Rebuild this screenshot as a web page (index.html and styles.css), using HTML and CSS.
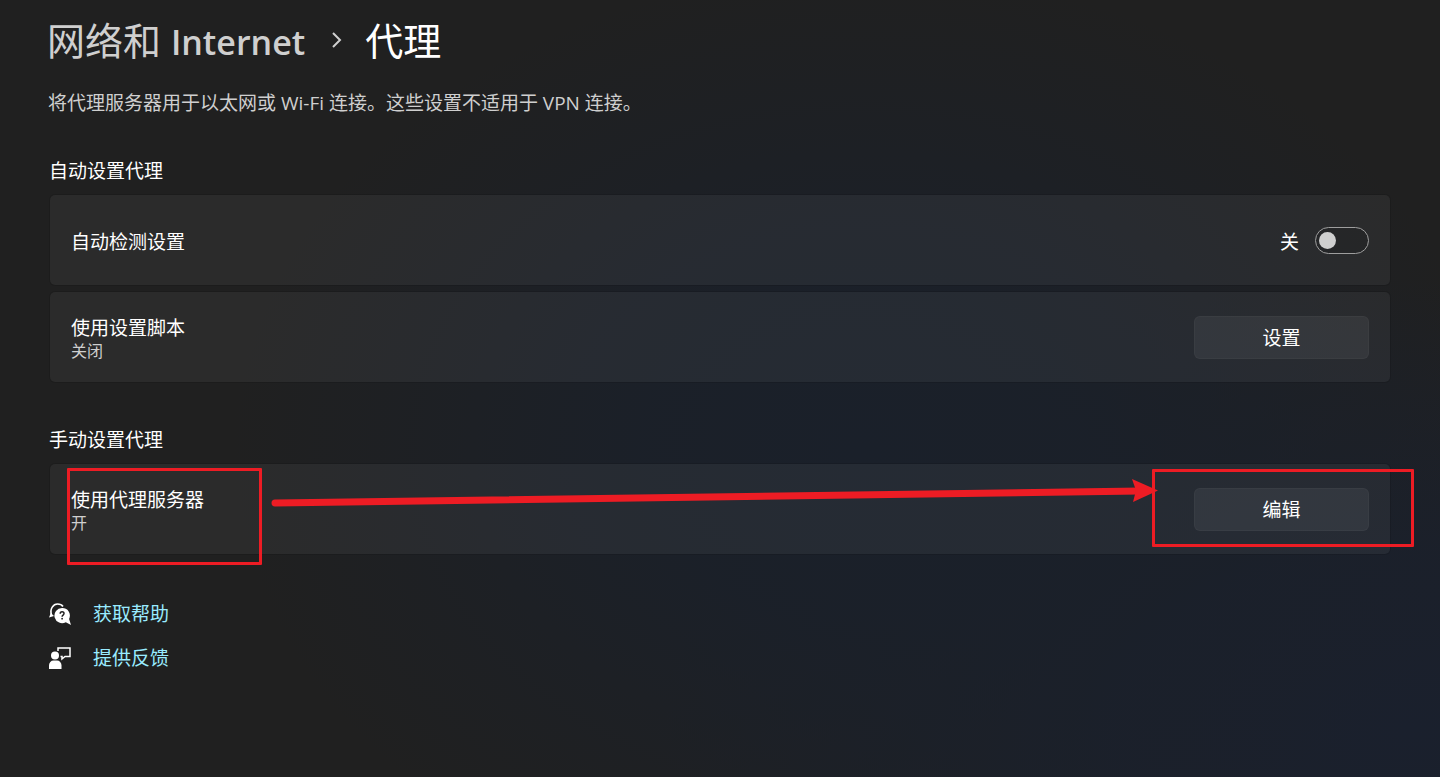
FILE: index.html
```html
<!DOCTYPE html>
<html lang="zh-CN">
<head>
  <meta charset="utf-8">
  <meta name="viewport" content="width=device-width, initial-scale=1">
  <title>代理</title>
  <link rel="stylesheet" href="styles.css">
</head>
<body>
  <main class="page">
    <h1 class="breadcrumb">
      <a class="crumb-link" href="#">网络和 <span class="latin">Internet</span></a>
      <svg class="crumb-arrow" viewBox="0 0 12 18" aria-hidden="true">
        <path d="M2 2l7 7-7 7" fill="none" stroke="currentColor" stroke-width="2"/>
      </svg>
      <span class="crumb-current">代理</span>
    </h1>
    <p class="description">将代理服务器用于以太网或 Wi-Fi 连接。这些设置不适用于 VPN 连接。</p>

    <section class="section">
      <h2 class="section-title">自动设置代理</h2>
      <div class="card">
        <label class="card-text" for="auto-detect">自动检测设置</label>
        <div class="toggle-group">
          <span class="card-text">关</span>
          <input type="checkbox" id="auto-detect" class="toggle" role="switch">
        </div>
      </div>
      <div class="card">
        <div class="card-text">
          <div class="card-title">使用设置脚本</div>
          <div class="card-state">关闭</div>
        </div>
        <button class="card-btn">设置</button>
      </div>
    </section>

    <section class="section">
      <h2 class="section-title">手动设置代理</h2>
      <div class="card">
        <div class="card-text">
          <div class="card-title">使用代理服务器</div>
          <div class="card-state">开</div>
        </div>
        <button class="card-btn">编辑</button>

        <!-- Red marks: from the proxy label to its edit button -->
        <div class="mark mark-label"></div>
        <div class="mark mark-button"></div>
        <svg class="mark-arrow" aria-hidden="true">
          <line x1="4" y1="25" x2="98%" y2="13" stroke="#ed1c24" stroke-width="7" stroke-linecap="round"/>
          <svg x="100%" y="0" overflow="visible">
            <path d="M0 12.500L-26 1l4 11.500-3 11.500z" fill="#ed1c24"/>
          </svg>
        </svg>
      </div>
    </section>

    <nav class="help-links">
      <a class="help-link" href="#">
        <svg class="help-icon" viewBox="0 0 22 22" aria-hidden="true">
          <path d="M2.500 12C.5 5.500 4.500 1 8.500 1c2.500 0 4.500 1 5.500 2.500" fill="none" stroke="#fff" stroke-width="1.600"/>
          <path d="M0 14.500L1.800 10l3.200 3z" fill="#fff"/>
          <path d="M13 5a7.600 7.600 0 1 0 3.800 14.200l5.200 2.800-1.900-6A7.600 7.600 0 0 0 13 5z" fill="#fff"/>
          <path d="M11.200 10.700c0-2.700 3.800-2.600 3.800-.2 0 1.600-1.900 1.500-1.900 3.200" fill="none" stroke="#202020" stroke-width="1.500"/>
          <circle cx="13.100" cy="15.700" r=".9" fill="#202020"/>
        </svg>
        <span>获取帮助</span>
      </a>
      <a class="help-link" href="#">
        <svg class="help-icon" viewBox="0 0 22 22" aria-hidden="true">
          <path d="M9 4V1h12v8.500h-5L13 12V9.500h-1.500" fill="none" stroke="#fff" stroke-width="1.500"/>
          <circle cx="6" cy="8.500" r="4" fill="#fff"/>
          <path d="M0 22v-3.500C0 15.500 2 13.500 4.500 13.500h3.500c2.500 0 4.500 2 4.500 5V22z" fill="#fff"/>
        </svg>
        <span>提供反馈</span>
      </a>
    </nav>
  </main>
</body>
</html>
```

FILE: styles.css
```css
* {
  box-sizing: border-box;
}

body {
  margin: 0;
  min-height: 100vh;
  font-family: "Open Sans", "Noto Sans CJK SC", sans-serif;
  font-size: 19px;
  line-height: 24px;
  color: #fff;
  background:
    radial-gradient(ellipse 44% 62% at 60% 58%, #1a202a 0%, rgba(26, 32, 42, 0.85) 35%, rgba(26, 32, 42, 0) 100%),
    radial-gradient(ellipse 52% 58% at 98% 94%, #1a202d 0%, rgba(26, 32, 45, 0.8) 40%, rgba(26, 32, 45, 0) 100%),
    #202020;
}

.page {
  padding: 15px 50px;
}

.breadcrumb {
  display: flex;
  align-items: center;
  margin: 0 0 26px -3px;
  font-size: 38px;
  font-weight: 400;
  line-height: 50px;
}

.crumb-link {
  color: #cfcfcf;
  text-decoration: none;
}

.latin {
  font-size: 34px;
  font-weight: 600;
  line-height: 1;
}

.crumb-arrow {
  width: 12px;
  height: 18px;
  margin: 0 22px 0 26px;
  color: #cfcfcf;
}

.description {
  margin: 0 0 44px -2px;
  color: #cfcfcf;
}

.section {
  display: flex;
  flex-direction: column;
  gap: 7px;
  margin-bottom: 46px;
}

.section-title {
  margin: 0 0 5px -1px;
  font-size: 19px;
  font-weight: 400;
}

.card {
  position: relative;
  display: flex;
  align-items: center;
  justify-content: space-between;
  min-height: 90px;
  padding: 0 21px;
  background: rgba(255, 255, 255, 0.05);
  border-radius: 5px;
  box-shadow: 0 0 0 1px rgba(0, 0, 0, 0.1);
}

.card-text {
  padding-top: 4px;
}

.card-state {
  font-size: 16px;
  line-height: 22px;
  color: #cfcfcf;
}

.card-btn {
  width: 175px;
  height: 43px;
  padding: 2px 0 0;
  font: inherit;
  color: #fff;
  background: rgba(255, 255, 255, 0.06);
  border: 1px solid rgba(255, 255, 255, 0.03);
  border-radius: 6px;
}

.card-btn:hover {
  background: rgba(255, 255, 255, 0.09);
}

.toggle-group {
  display: flex;
  align-items: center;
  gap: 16px;
}

.toggle {
  appearance: none;
  display: flex;
  align-items: center;
  width: 54px;
  height: 27px;
  margin: 0;
  padding: 0 3px;
  background: rgba(0, 0, 0, 0.1);
  border: 1px solid #9e9e9e;
  border-radius: 14px;
}

.toggle::before {
  content: "";
  width: 17px;
  height: 17px;
  background: #cfcfcf;
  border-radius: 50%;
}

.toggle:checked {
  justify-content: flex-end;
}

.mark {
  position: absolute;
  border: 3px solid #ed1c24;
  border-radius: 1px;
  pointer-events: none;
}

.mark-label {
  top: 4px;
  left: 17px;
  width: 195px;
  height: 97px;
}

.mark-button {
  top: 5px;
  right: -24px;
  width: 262px;
  height: 78px;
}

.mark-arrow {
  position: absolute;
  top: 14px;
  left: 221px;
  width: calc(100% - 453px);
  height: 32px;
  overflow: visible;
  pointer-events: none;
}

.help-links {
  display: flex;
  flex-direction: column;
  align-items: flex-start;
  gap: 20px;
  padding-top: 2px;
}

.help-link {
  display: flex;
  align-items: center;
  gap: 22px;
  margin-left: -1px;
  color: #99ebff;
  text-decoration: none;
}

.help-icon {
  width: 22px;
  height: 22px;
}
```
